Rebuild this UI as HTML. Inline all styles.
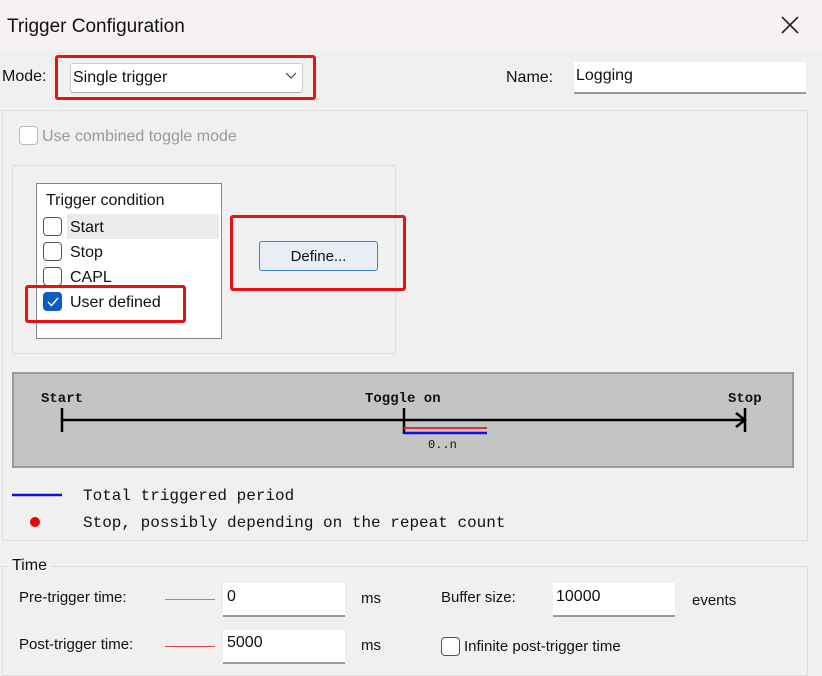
<!DOCTYPE html>
<html><head><meta charset="utf-8"><style>
*{margin:0;padding:0;box-sizing:border-box}
body{width:822px;height:669px;overflow:hidden;background:#f0f0f0;font-family:"Liberation Sans",sans-serif;font-size:16px;color:#111;position:relative}
.a{position:absolute;white-space:nowrap;line-height:1.38}
.mono{font-family:"Liberation Mono","DejaVu Sans Mono",monospace;}
.inp{position:absolute;background:#fff;border-bottom:2px solid #999}
.red{position:absolute;border:3px solid #e81010;border-radius:3px}
.cb{position:absolute;width:19px;height:19px;border:1.5px solid #555;border-radius:4px;background:#fff}
</style></head><body>
<div class="a" style="left:0;top:0;width:822px;height:50px;background:#f6f3f2"></div>
<div class="a" style="left:7px;top:14px;font-size:19px">Trigger Configuration</div>
<svg class="a" style="left:781px;top:16px" width="18" height="18"><path d="M1 1L17 17M17 1L1 17" stroke="#222" stroke-width="1.6"/></svg>

<div class="a" style="left:2px;top:66px">Mode:</div>
<div class="inp" style="left:70px;top:63px;width:233px;height:30px;border:1px solid #ccc;border-bottom:1px solid #aaa;border-radius:3px"></div>
<div class="a" style="left:73px;top:67px">Single trigger</div>
<svg class="a" style="left:285px;top:72px" width="12" height="8"><path d="M1 1L6 6L11 1" stroke="#444" fill="none" stroke-width="1.2"/></svg>
<div class="red" style="left:55px;top:55px;width:261px;height:45px"></div>
<div class="a" style="left:506px;top:67px">Name:</div>
<div class="inp" style="left:574px;top:62px;width:232px;height:32px"></div>
<div class="a" style="left:576px;top:65px">Logging</div>

<div class="a" style="left:2px;top:110px;width:806px;height:431px;border:1px solid #ddd"></div>
<div class="cb" style="left:19px;top:126px;border-color:#bbb"></div>
<div class="a" style="left:42px;top:126px;color:#999">Use combined toggle mode</div>

<div class="a" style="left:12px;top:165px;width:384px;height:189px;border:1px solid #ddd"></div>
<div class="a" style="left:36px;top:183px;width:186px;height:156px;background:#fff;border:1px solid #888"></div>
<div class="a" style="left:67px;top:214px;width:152px;height:25px;background:#ebebeb"></div>
<div class="a" style="left:46px;top:190px">Trigger condition</div>
<div class="cb" style="left:43px;top:217px"></div><div class="a" style="left:70px;top:217px">Start</div>
<div class="cb" style="left:43px;top:242px"></div><div class="a" style="left:70px;top:242px">Stop</div>
<div class="cb" style="left:43px;top:267px"></div><div class="a" style="left:70px;top:267px">CAPL</div>
<div class="cb" style="left:43px;top:292px;background:#0a5dc2;border-color:#0a5dc2"></div>
<svg class="a" style="left:46px;top:296px" width="14" height="12"><path d="M2 6L5.5 9.5L12 2" stroke="#fff" fill="none" stroke-width="1.5"/></svg>
<div class="a" style="left:70px;top:292px">User defined</div>
<div class="red" style="left:25px;top:285px;width:161px;height:38px"></div>
<div class="a" style="left:259px;top:241px;width:119px;height:30px;background:#e8eef5;border:1px solid #3d7fd0;border-radius:3px;text-align:center;line-height:30px;font-size:15px">Define...</div>
<div class="red" style="left:230px;top:215px;width:176px;height:76px"></div>

<div class="a" style="left:12px;top:372px;width:782px;height:96px;background:#c4c4c4;border:2px solid #999"></div>
<div class="a mono" style="left:41px;top:390px;font-size:14px;font-weight:bold">Start</div>
<div class="a mono" style="left:365px;top:390px;font-size:14px;font-weight:bold">Toggle on</div>
<div class="a mono" style="left:728px;top:390px;font-size:14px;font-weight:bold">Stop</div>
<svg class="a" style="left:0;top:400px" width="822" height="60">
<path d="M62 20H745M62 8V32M745 8V32M404 8V34M736 13L745 20L736 27" stroke="#000" stroke-width="2.5" fill="none"/>
<path d="M404 28H487" stroke="#e03030" stroke-width="2"/><path d="M404 33H487" stroke="#1010e0" stroke-width="2.5"/>
</svg>
<div class="a mono" style="left:428px;top:437px;font-size:12px">0..n</div>
<svg class="a" style="left:0;top:485px" width="70" height="45"><path d="M12 10H62" stroke="#1010e0" stroke-width="2.5"/><circle cx="35" cy="37" r="5" fill="#e00"/></svg>
<div class="a mono" style="left:83px;top:485px;font-size:16px">Total triggered period</div>
<div class="a mono" style="left:83px;top:512px;font-size:16px">Stop, possibly depending on the repeat count</div>

<div class="a" style="left:2px;top:566px;width:806px;height:110px;border:1px solid #ddd"></div>
<div class="a" style="left:8px;top:555px;background:#f0f0f0;padding:0 4px">Time</div>
<div class="a" style="left:19px;top:588px;font-size:15px">Pre-trigger time:</div>
<div class="a" style="left:165px;top:599px;width:50px;height:1px;background:#6a6"></div>
<div class="inp" style="left:223px;top:583px;width:122px;height:34px"></div>
<div class="a" style="left:227px;top:586px">0</div>
<div class="a" style="left:361px;top:589px;font-size:15px">ms</div>
<div class="a" style="left:441px;top:588px;font-size:15px">Buffer size:</div>
<div class="inp" style="left:553px;top:583px;width:122px;height:34px"></div>
<div class="a" style="left:556px;top:586px">10000</div>
<div class="a" style="left:692px;top:591px;font-size:15px">events</div>
<div class="a" style="left:19px;top:635px;font-size:15px">Post-trigger time:</div>
<div class="a" style="left:165px;top:646px;width:50px;height:1px;background:#d44"></div>
<div class="inp" style="left:223px;top:630px;width:122px;height:34px"></div>
<div class="a" style="left:227px;top:632px">5000</div>
<div class="a" style="left:361px;top:636px;font-size:15px">ms</div>
<div class="cb" style="left:441px;top:637px"></div>
<div class="a" style="left:464px;top:637px;font-size:15px">Infinite post-trigger time</div>
</body></html>
